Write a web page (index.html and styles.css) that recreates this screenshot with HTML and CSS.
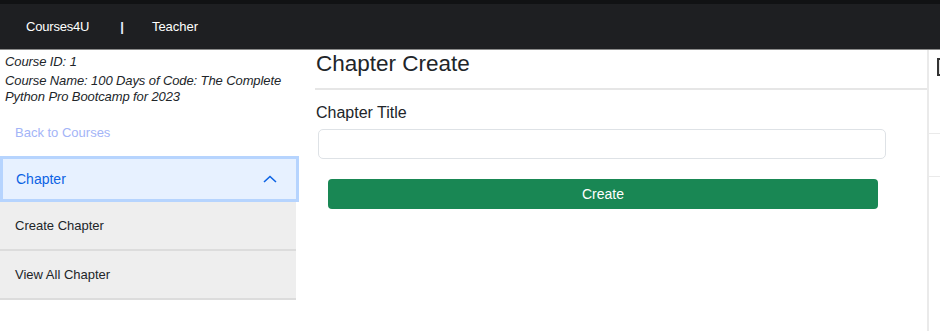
FILE: index.html
```html
<!DOCTYPE html>
<html lang="en">
<head>
    <meta charset="UTF-8">
    <meta name="viewport" content="width=device-width, initial-scale=1.0">
    <title>Chapter Create</title>
    <link rel="stylesheet" href="styles.css">
</head>
<body>
    <nav class="navbar">
        <a class="brand" href="#">Courses4U</a>
        <span class="divider">|</span>
        <a class="nav-link" href="#">Teacher</a>
    </nav>

    <div class="layout">
        <aside class="sidebar">
            <p class="course-info">Course ID: 1</p>
            <p class="course-info">Course Name: 100 Days of Code: The Complete Python Pro Bootcamp for 2023</p>
            <a class="back-link" href="#">Back to Courses</a>

            <div class="accordion">
                <button class="accordion-btn">
                    <span>Chapter</span>
                    <svg width="14" height="8" viewBox="0 0 14 8"><path d="M1 7 L7 1.5 L13 7" fill="none" stroke="#0c63e4" stroke-width="1.6"/></svg>
                </button>
                <a class="accordion-item" href="#">Create Chapter</a>
                <a class="accordion-item" href="#">View All Chapter</a>
            </div>
        </aside>

        <main class="content">
            <h1 class="page-title">Chapter Create</h1>
            <form class="chapter-form">
                <label for="chapterTitle">Chapter Title</label>
                <input type="text" id="chapterTitle">
                <button type="submit" class="btn-create">Create</button>
            </form>
        </main>

        <div class="side-panel">
            <div class="panel-box"><span class="panel-icon"></span></div>
            <div class="panel-row"></div>
        </div>
    </div>
</body>
</html>
```

FILE: styles.css
```css
body { margin: 0; font-family: "Liberation Sans", Arial, sans-serif; color: #212529; background: #fff; }
a { text-decoration: none; }

.navbar { height: 45px; background: #1e1f22; border-top: 4px solid #111214; border-bottom: 1px solid #8a8a8a; display: flex; align-items: center; font-size: 13px; }
.brand { color: #fff; margin-left: 26px; letter-spacing: -0.2px; }
.divider { color: #e8f0ff; margin-left: 31px; font-weight: bold; }
.nav-link { color: #fff; margin-left: 28px; }

.layout { display: flex; height: 281px; }

.sidebar { width: 296px; flex-shrink: 0; }
.course-info { margin: 4px 0 0 5px; font-style: italic; line-height: 16px; font-size: 13px; letter-spacing: -0.1px; }
.course-info + .course-info { margin-top: 3px; }
.back-link { display: block; color: #a3b4f7; margin: 20px 0 0 15px; font-size: 13px; }

.accordion { margin-top: 16px; }
.accordion-btn { width: 299px; height: 46px; display: flex; align-items: center; justify-content: space-between; padding: 0 19px 0 13px; background: #e7f1ff; color: #0c63e4; border: 3px solid #b6d4fe; font-family: inherit; font-size: 14px; text-align: left; box-sizing: border-box; margin: 0; }
.accordion-item { display: flex; align-items: center; height: 47px; padding-left: 15px; background: #eee; color: #212529; border-bottom: 2px solid #dcdcdc; font-size: 13px; }

.content { flex: 1; padding-left: 19px; }
.page-title { margin: 0; padding: 1px 0 11px 1px; font-size: 22.5px; font-weight: normal; line-height: 26px; border-bottom: 2px solid #e6e6e6; }
.chapter-form { display: flex; flex-direction: column; padding-left: 1px; }
.chapter-form label { font-size: 16px; margin-top: 14px; line-height: 18px; }
.chapter-form input { width: 568px; height: 30px; margin: 7px 0 0 2px; border: 1px solid #dee2e6; border-radius: 5px; box-sizing: border-box; }
.btn-create { width: 550px; height: 30px; margin: 20px 0 0 12px; background: #198754; color: #fff; border: none; border-radius: 4px; font-family: inherit; font-size: 14px; }

.side-panel { width: 11px; border-left: 2px solid #eaeaea; flex-shrink: 0; }
.panel-box { height: 75px; border-bottom: 1px solid #eaeaea; }
.panel-icon { display: block; width: 8px; height: 14px; margin: 8px 0 0 8px; border: 2px solid #333; border-right: none; background: #e6e6e6; }
.panel-row { height: 42px; border-bottom: 1px solid #eaeaea; }
```
